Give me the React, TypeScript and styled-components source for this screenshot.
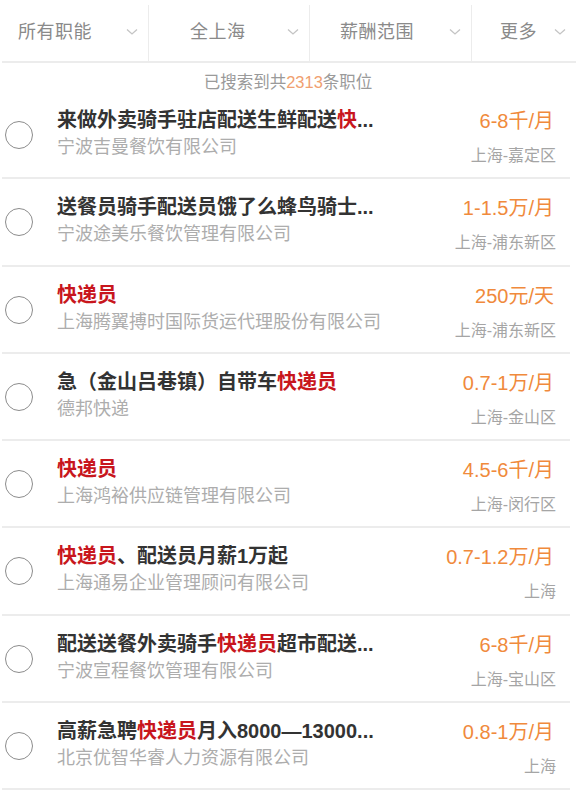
import React from "react";
import styled, { createGlobalStyle } from "styled-components";

const Global = createGlobalStyle`
  html, body { margin: 0; padding: 0; background: #fff; }
  body { font-family: "Liberation Sans", "Noto Sans CJK SC", sans-serif; }
`;

const Page = styled.div`
  width: 576px;
  height: 795px;
  overflow: hidden;
  background: #fff;
`;

const FilterBar = styled.div`
  display: grid;
  grid-template-columns: 147px 161px 162px 1fr;
  height: 61px;
  border-bottom: 2px solid #ececec;
  margin-left: 2px;
`;

const FilterCell = styled.div<{ $pl: number; $divider: boolean }>`
  display: flex;
  align-items: center;
  justify-content: space-between;
  padding-left: ${(p) => p.$pl}px;
  padding-right: 10px;
  box-sizing: border-box;
  border-right: ${(p) => (p.$divider ? "1.5px solid #ececec" : "none")};
  margin-top: 5px;
  padding-bottom: 6px;
`;

const FilterLabel = styled.span`
  font-size: 18px;
  color: #8a8a8a;
  letter-spacing: 0.5px;
`;

const Chevron = () => (
  <svg width="12" height="8" viewBox="0 0 12 8" style={{ marginTop: 4 }}>
    <path d="M1 1.5 L6 6 L11 1.5" fill="none" stroke="#c4c4c4" strokeWidth="1.3" />
  </svg>
);

const CountBar = styled.div`
  height: 29px;
  padding-top: 10px;
  box-sizing: border-box;
  text-align: center;
  font-size: 16.5px;
  line-height: 18px;
  color: #9a9a9a;
`;

const CountNum = styled.span`
  color: #f0a070;
`;

const Row = styled.div`
  display: flex;
  align-items: flex-start;
  height: 87.25px;
  box-sizing: border-box;
  border-bottom: 2px solid #ececec;
  margin: 0 6px 0 2px;
  padding: 16px 16px 0 3px;
`;

const Radio = styled.div`
  width: 26px;
  height: 26px;
  border: 1.6px solid #8c8c8c;
  border-radius: 50%;
  margin-top: 13px;
  flex-shrink: 0;
`;

const Main = styled.div`
  flex: 1;
  min-width: 0;
  margin-left: 24px;
  display: flex;
  flex-direction: column;
`;

const Title = styled.div`
  font-size: 20px;
  line-height: 24px;
  font-weight: 700;
  color: #333;
  white-space: nowrap;
`;

const Hl = styled.span`
  color: #c8161d;
`;

const Company = styled.div`
  font-size: 18px;
  line-height: 24px;
  color: #adadad;
  margin-top: 3px;
  white-space: nowrap;
`;

const Side = styled.div`
  display: flex;
  flex-direction: column;
  align-items: flex-end;
  flex-shrink: 0;
`;

const Salary = styled.div`
  font-size: 20px;
  line-height: 26px;
  color: #f08a3c;
`;

const Location = styled.div`
  font-size: 16px;
  line-height: 22px;
  color: #a5a5a5;
  margin-top: 11px;
  margin-right: -2px;
`;

type Part = { t: string; h?: boolean };
type Job = { title: Part[]; company: string; salary: string; loc: string };

const jobs: Job[] = [
  { title: [{ t: "来做外卖骑手驻店配送生鲜配送" }, { t: "快", h: true }, { t: "..." }], company: "宁波吉曼餐饮有限公司", salary: "6-8千/月", loc: "上海-嘉定区" },
  { title: [{ t: "送餐员骑手配送员饿了么蜂鸟骑士..." }], company: "宁波途美乐餐饮管理有限公司", salary: "1-1.5万/月", loc: "上海-浦东新区" },
  { title: [{ t: "快递员", h: true }], company: "上海腾翼搏时国际货运代理股份有限公司", salary: "250元/天", loc: "上海-浦东新区" },
  { title: [{ t: "急（金山吕巷镇）自带车" }, { t: "快递员", h: true }], company: "德邦快递", salary: "0.7-1万/月", loc: "上海-金山区" },
  { title: [{ t: "快递员", h: true }], company: "上海鸿裕供应链管理有限公司", salary: "4.5-6千/月", loc: "上海-闵行区" },
  { title: [{ t: "快递员", h: true }, { t: "、配送员月薪1万起" }], company: "上海通易企业管理顾问有限公司", salary: "0.7-1.2万/月", loc: "上海" },
  { title: [{ t: "配送送餐外卖骑手" }, { t: "快递员", h: true }, { t: "超市配送..." }], company: "宁波宣程餐饮管理有限公司", salary: "6-8千/月", loc: "上海-宝山区" },
  { title: [{ t: "高薪急聘" }, { t: "快递员", h: true }, { t: "月入8000—13000..." }], company: "北京优智华睿人力资源有限公司", salary: "0.8-1万/月", loc: "上海" },
];

const filters = [
  { label: "所有职能", pl: 16 },
  { label: "全上海", pl: 41 },
  { label: "薪酬范围", pl: 30 },
  { label: "更多", pl: 28 },
];

export default function App() {
  return (
    <Page>
      <Global />
      <FilterBar>
        {filters.map((f, i) => (
          <FilterCell key={f.label} $pl={f.pl} $divider={i < 3}>
            <FilterLabel>{f.label}</FilterLabel>
            <Chevron />
          </FilterCell>
        ))}
      </FilterBar>
      <CountBar>
        已搜索到共<CountNum>2313</CountNum>条职位
      </CountBar>
      {jobs.map((j, i) => (
        <Row key={i}>
          <Radio />
          <Main>
            <Title>
              {j.title.map((p, k) => (p.h ? <Hl key={k}>{p.t}</Hl> : <span key={k}>{p.t}</span>))}
            </Title>
            <Company>{j.company}</Company>
          </Main>
          <Side>
            <Salary>{j.salary}</Salary>
            <Location>{j.loc}</Location>
          </Side>
        </Row>
      ))}
    </Page>
  );
}
